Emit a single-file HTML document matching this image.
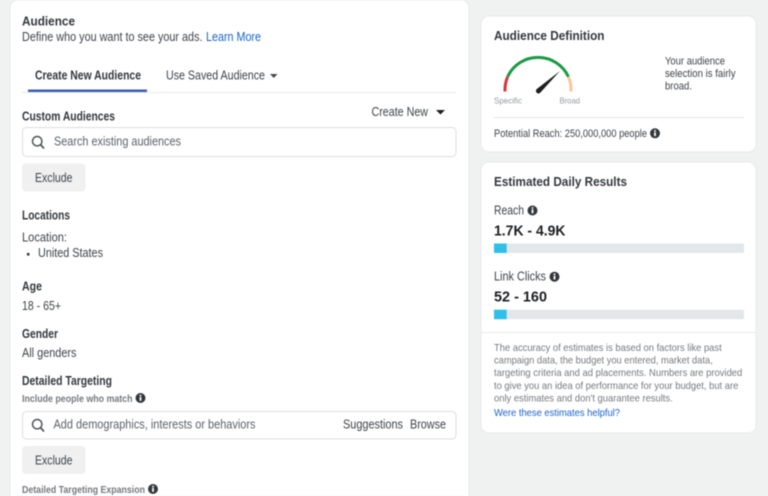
<!DOCTYPE html>
<html lang="en">
<head>
<meta charset="utf-8">
<title>Audience</title>
<style>
html,body{margin:0;padding:0;width:768px;height:496px;overflow:hidden;background:#f0f2f2}
svg{display:block;filter:blur(.45px)}
text{font-family:"Liberation Sans",sans-serif;font-size:12.5px;fill:#3f4349}
.b{font-weight:bold;fill:#33373c}
.g{fill:#5c6169}
.s{font-size:10.5px;fill:#75787d}
.l{fill:#1a63cc}
</style>
</head>
<body>
<svg width="768" height="496" viewBox="0 0 768 496" xmlns="http://www.w3.org/2000/svg">
<defs>
<g id="i"><circle r="5" fill="#33373c"/><rect x="-.9" y="-1" width="1.8" height="3.8" fill="#fff"/><rect x="-.9" y="-3.2" width="1.8" height="1.5" fill="#fff"/></g>
<g id="m" fill="none" stroke="#4b4f56"><circle cx="5.2" cy="5.2" r="4.7" stroke-width="1.4"/><path d="M8.6 8.7 L12 12.4" stroke-width="1.7"/></g>
</defs>

<!-- left card -->
<rect x="10" y="0" width="459" height="520" rx="8" fill="#fff" stroke="#e8eaea"/>
<text class="b" x="22" y="25.3" textLength="53" lengthAdjust="spacingAndGlyphs">Audience</text>
<text x="22" y="41" textLength="180.5" lengthAdjust="spacingAndGlyphs">Define who you want to see your ads.</text>
<text class="l" x="206" y="41" textLength="55" lengthAdjust="spacingAndGlyphs">Learn More</text>

<text class="b" x="35" y="79.5" textLength="106" lengthAdjust="spacingAndGlyphs">Create New Audience</text>
<text x="166" y="79.5" textLength="99" lengthAdjust="spacingAndGlyphs">Use Saved Audience</text>
<path d="M270 74h7.5l-3.75 4z" fill="#444950"/>
<rect x="22" y="92" width="434" height="1" fill="#e6e8ea"/>
<rect x="28" y="89.5" width="119" height="2.5" fill="#3b5fae"/>

<text class="b" x="22" y="120.5" textLength="93" lengthAdjust="spacingAndGlyphs">Custom Audiences</text>
<text x="371.5" y="116" textLength="56.5" lengthAdjust="spacingAndGlyphs">Create New</text>
<path d="M436 110h9l-4.5 4.5z" fill="#1c1e21"/>

<rect x="22.5" y="127.5" width="433.5" height="29" rx="4" fill="#fff" stroke="#dadde1"/>
<use href="#m" x="32" y="136"/>
<text class="g" x="54" y="145.7" textLength="127" lengthAdjust="spacingAndGlyphs">Search existing audiences</text>

<rect x="22" y="163.5" width="63.5" height="28" rx="4" fill="#f0f0f0"/>
<text x="35" y="182" textLength="37.5" lengthAdjust="spacingAndGlyphs">Exclude</text>

<text class="b" x="22" y="219.3" textLength="48" lengthAdjust="spacingAndGlyphs">Locations</text>
<text x="22" y="241.3" textLength="45" lengthAdjust="spacingAndGlyphs">Location:</text>
<circle cx="28.2" cy="254.3" r="1.5" fill="#3f4349"/>
<text x="38" y="257" textLength="65" lengthAdjust="spacingAndGlyphs">United States</text>

<text class="b" x="22" y="290.5" textLength="20" lengthAdjust="spacingAndGlyphs">Age</text>
<text x="22" y="310" textLength="39" lengthAdjust="spacingAndGlyphs">18 - 65+</text>

<text class="b" x="22" y="338" textLength="36" lengthAdjust="spacingAndGlyphs">Gender</text>
<text x="22" y="357" textLength="54.5" lengthAdjust="spacingAndGlyphs">All genders</text>

<text class="b" x="22" y="385" textLength="90" lengthAdjust="spacingAndGlyphs">Detailed Targeting</text>
<text class="s" style="font-weight:bold" x="22" y="402" textLength="110.5" lengthAdjust="spacingAndGlyphs">Include people who match</text>
<use href="#i" x="140.5" y="398"/>

<rect x="22.5" y="411.5" width="433.5" height="27.5" rx="4" fill="#fff" stroke="#dadde1"/>
<use href="#m" x="32" y="419"/>
<text class="g" x="53.5" y="428.7" textLength="202" lengthAdjust="spacingAndGlyphs">Add demographics, interests or behaviors</text>
<text x="343" y="428.7" textLength="60" lengthAdjust="spacingAndGlyphs">Suggestions</text>
<text x="410" y="428.7" textLength="36" lengthAdjust="spacingAndGlyphs">Browse</text>

<rect x="22" y="446" width="63.5" height="28" rx="4" fill="#f0f0f0"/>
<text x="35" y="464.3" textLength="37.5" lengthAdjust="spacingAndGlyphs">Exclude</text>

<text class="s" style="font-weight:bold" x="22" y="493" textLength="123" lengthAdjust="spacingAndGlyphs">Detailed Targeting Expansion</text>
<use href="#i" x="153" y="489"/>

<!-- audience definition card -->
<rect x="481" y="16" width="275" height="136" rx="8" fill="#fff" stroke="#e8eaea"/>
<text class="b" x="494" y="40" textLength="110.5" lengthAdjust="spacingAndGlyphs">Audience Definition</text>
<g fill="none" stroke-width="3">
<path d="M505 91.5 A33.5 33.5 0 0 1 507.6 76.8" stroke="#d6353c"/>
<path d="M507.6 76.8 A33.5 33.5 0 0 1 568.4 76.8" stroke="#1a9a46"/>
<path d="M568.4 76.8 A33.5 33.5 0 0 1 571 91.5" stroke="#fcc797"/>
</g>
<path d="M536.8 89 L560 71 L540.2 92.8 A2.4 2.4 0 0 1 536.8 89z" fill="#1c1e21"/>
<text x="494" y="103.5" style="font-size:8.5px;fill:#94979b" textLength="28" lengthAdjust="spacingAndGlyphs">Specific</text>
<text x="559.5" y="103.5" style="font-size:8.5px;fill:#94979b" textLength="20.5" lengthAdjust="spacingAndGlyphs">Broad</text>
<text style="font-size:11px" x="665" y="64.5" textLength="60" lengthAdjust="spacingAndGlyphs">Your audience</text>
<text style="font-size:11px" x="665" y="77" textLength="70.5" lengthAdjust="spacingAndGlyphs">selection is fairly</text>
<text style="font-size:11px" x="665" y="89.5" textLength="27" lengthAdjust="spacingAndGlyphs">broad.</text>
<rect x="494" y="117" width="250" height="1" fill="#e4e6e9"/>
<text style="font-size:11px" x="494" y="137" textLength="153" lengthAdjust="spacingAndGlyphs">Potential Reach: 250,000,000 people</text>
<use href="#i" x="655" y="133.3"/>

<!-- estimated results card -->
<rect x="481" y="162" width="275" height="271" rx="8" fill="#fff" stroke="#e8eaea"/>
<text class="b" x="494" y="186" textLength="133" lengthAdjust="spacingAndGlyphs">Estimated Daily Results</text>
<text x="494" y="214.7" textLength="30" lengthAdjust="spacingAndGlyphs">Reach</text>
<use href="#i" x="532.5" y="210.5"/>
<text class="b" style="font-size:15px;fill:#1c1e21" x="494" y="235.7" textLength="71.5" lengthAdjust="spacingAndGlyphs">1.7K - 4.9K</text>
<rect x="494" y="243.5" width="250" height="9.5" fill="#e4e7ea"/>
<rect x="494" y="243.5" width="12.7" height="9.5" fill="#2fbfe9"/>
<text x="494" y="280.7" textLength="52" lengthAdjust="spacingAndGlyphs">Link Clicks</text>
<use href="#i" x="554.5" y="276.7"/>
<text class="b" style="font-size:15px;fill:#1c1e21" x="494" y="301.7" textLength="53" lengthAdjust="spacingAndGlyphs">52 - 160</text>
<rect x="494" y="309.7" width="250" height="9.5" fill="#e4e7ea"/>
<rect x="494" y="309.7" width="12.7" height="9.5" fill="#2fbfe9"/>
<rect x="481" y="332" width="275" height="1" fill="#e8eaec"/>
<text class="s" x="494" y="351" textLength="227.7" lengthAdjust="spacingAndGlyphs">The accuracy of estimates is based on factors like past</text>
<text class="s" x="494" y="363.6" textLength="218.7" lengthAdjust="spacingAndGlyphs">campaign data, the budget you entered, market data,</text>
<text class="s" x="494" y="376.2" textLength="248.3" lengthAdjust="spacingAndGlyphs">targeting criteria and ad placements. Numbers are provided</text>
<text class="s" x="494" y="388.8" textLength="244.3" lengthAdjust="spacingAndGlyphs">to give you an idea of performance for your budget, but are</text>
<text class="s" x="494" y="401.5" textLength="178.7" lengthAdjust="spacingAndGlyphs">only estimates and don't guarantee results.</text>
<text class="s l" style="fill:#1a63cc" x="494" y="416" textLength="126" lengthAdjust="spacingAndGlyphs">Were these estimates helpful?</text>
</svg>
</body>
</html>
